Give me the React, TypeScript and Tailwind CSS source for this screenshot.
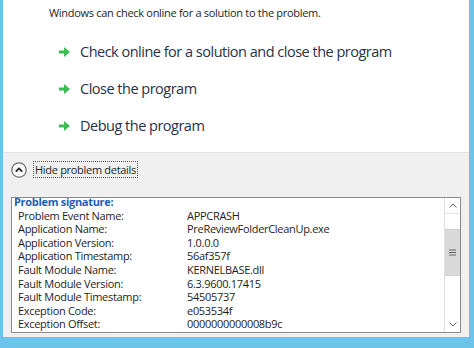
const details: [string, string][] = [
  ['Problem Event Name:', 'APPCRASH'],
  ['Application Name:', 'PreReviewFolderCleanUp.exe'],
  ['Application Version:', '1.0.0.0'],
  ['Application Timestamp:', '56af357f'],
  ['Fault Module Name:', 'KERNELBASE.dll'],
  ['Fault Module Version:', '6.3.9600.17415'],
  ['Fault Module Timestamp:', '54505737'],
  ['Exception Code:', 'e053534f'],
  ['Exception Offset:', '0000000000008b9c'],
]

const options = ['Check online for a solution and close the program', 'Close the program', 'Debug the program']

function GreenArrow() {
  return (
    <svg width="11" height="10" viewBox="0 0 11 10" className="shrink-0">
      <path d="M0 3.5 H5 V0 L11 5 L5 10 V6.5 H0 Z" fill="#3dbb55" />
    </svg>
  )
}

function ChevronUpCircle() {
  return (
    <svg width="16" height="16" viewBox="0 0 16 16">
      <circle cx="8" cy="8" r="7.2" fill="#fbfbfb" stroke="#6e6e6e" strokeWidth="1.2" />
      <path d="M4.8 9.6 L8 6.4 L11.2 9.6" fill="none" stroke="#222" strokeWidth="1.8" />
    </svg>
  )
}

export default function App() {
  return (
    <div
      className="w-[474px] h-[348px] bg-[#6cc4ea] pl-[3px] pr-[5px] pb-[11px] flex flex-col overflow-hidden"
      style={{ fontFamily: '"Open Sans", "Noto Sans", sans-serif' }}
    >
      <div className="h-[152px] bg-white pl-[46px] pt-[5px] shrink-0">
        <div className="text-[11px] leading-[16px] text-[#1e1e1e] tracking-[-0.3px]">
          Windows can check online for a solution to the problem.
        </div>
        <div className="flex flex-col gap-[15px] mt-[20px] pl-[10px]">
          {options.map(o => (
            <div key={o} className="flex items-center gap-[10px] h-[22px]">
              <GreenArrow />
              <span className="text-[14.5px] leading-[22px] text-[#27324a] tracking-[-0.5px]">{o}</span>
            </div>
          ))}
        </div>
      </div>

      <div className="flex-1 bg-[#f0f0f0] border-t border-[#e4e4e4] pl-[8px] pr-[8px] pt-[8px] pb-[4px] flex flex-col">
        <div className="flex items-center gap-[6px] h-[17px]">
          <ChevronUpCircle />
          <span className="text-[11px] leading-[15px] text-[#1e1e1e] border border-dotted border-[#555] px-[1px] tracking-[-0.3px]">
            Hide problem details
          </span>
        </div>

        <div className="mt-[19px] flex-1 border border-[#8a8a8a] bg-white flex overflow-hidden">
          <div className="flex-1 overflow-hidden text-[11px] text-[#1e1e1e] tracking-[-0.3px]">
            <div className="text-[#1f5db3] font-bold leading-[13.6px] pl-[2px] -mt-[3px]">Problem signature:</div>
            {details.map(([k, v]) => (
              <div key={k} className="flex leading-[13.6px]">
                <span className="w-[175px] pl-[6px] shrink-0">{k}</span>
                <span>{v}</span>
              </div>
            ))}
          </div>
          <div className="w-[16px] border-l border-[#e0e0e0] bg-[#f8f8f8] flex flex-col">
            <div className="h-[16px] flex items-center justify-center border-b border-[#e6e6e6] bg-white">
              <svg width="8" height="5" viewBox="0 0 8 5">
                <path d="M0.5 4.5 L4 1 L7.5 4.5" fill="none" stroke="#606060" strokeWidth="1" />
              </svg>
            </div>
            <div className="h-[15px] bg-white" />
            <div className="h-[47px] bg-[#dadada] border-y border-[#cfcfcf] flex items-center justify-center">
              <svg width="7" height="7" viewBox="0 0 7 7">
                <path d="M0 1 H7 M0 3.5 H7 M0 6 H7" stroke="#606060" strokeWidth="1" />
              </svg>
            </div>
            <div className="flex-1 bg-white" />
            <div className="h-[16px] flex items-center justify-center bg-white">
              <svg width="8" height="5" viewBox="0 0 8 5">
                <path d="M0.5 0.5 L4 4 L7.5 0.5" fill="none" stroke="#606060" strokeWidth="1" />
              </svg>
            </div>
          </div>
        </div>
      </div>
    </div>
  )
}
